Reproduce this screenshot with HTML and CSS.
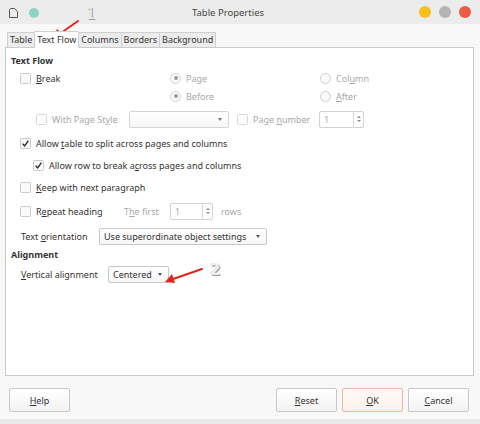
FILE: index.html
```html
<!DOCTYPE html>
<html>
<head>
<meta charset="utf-8">
<link rel="stylesheet" href="styles.css">
</head>
<body>
<div class="window">
  <header class="titlebar">
    <div class="tb-left">
      <svg class="doc-icon" width="9" height="10" viewBox="0 0 9 10"><path d="M1.5 0.5 H5.5 L8.5 3.5 V9.5 H0.5 V1.5 Z" fill="none" stroke="#555" stroke-width="1" stroke-linejoin="round"/></svg>
      <span class="dot teal"></span>
    </div>
    <div class="title">Table Properties</div>
    <div class="tb-right">
      <span class="dot yellow"></span>
      <span class="dot grey"></span>
      <span class="dot red"></span>
    </div>
  </header>

  <main class="body">
    <nav class="tabs">
      <span class="tab">Table</span>
      <span class="tab active">Text Flow</span>
      <span class="tab">Columns</span>
      <span class="tab">Borders</span>
      <span class="tab">Background</span>
    </nav>

    <section class="panel">
      <div class="heading h-flow">Text Flow</div>

      <div class="break-grid">
        <label class="opt"><span class="cb"></span><span><u>B</u>reak</span></label>
        <label class="opt dis"><span class="rb on"></span><span>Page</span></label>
        <label class="opt dis"><span class="rb"></span><span>Col<u>u</u>mn</span></label>
        <span></span>
        <label class="opt dis"><span class="rb on"></span><span>Before</span></label>
        <label class="opt dis"><span class="rb"></span><span><u>A</u>fter</span></label>
      </div>

      <div class="row r-style">
        <label class="opt dis w-style"><span class="cb dis"></span><span>With Page St<u>y</u>le</span></label>
        <span class="select dis sel-style"><span class="sel-text"></span><span class="caret"></span></span>
        <label class="opt dis pn"><span class="cb dis"></span><span>Page <u>n</u>umber</span></label>
        <span class="spin dis sp-pn"><span class="spin-val">1</span><span class="spin-btns"><i class="up"></i><i class="down"></i></span></span>
      </div>

      <div class="row r-allow">
        <label class="opt"><span class="cb"><svg viewBox="0 0 11 11" width="11" height="11"><path d="M2.6 5.6 L4.6 7.8 L8.4 2.6" fill="none" stroke="#2b2b2b" stroke-width="1.4"/></svg></span><span>Allow <u>t</u>able to split across pages and columns</span></label>
      </div>

      <div class="row r-row">
        <label class="opt"><span class="cb"><svg viewBox="0 0 11 11" width="11" height="11"><path d="M2.6 5.6 L4.6 7.8 L8.4 2.6" fill="none" stroke="#2b2b2b" stroke-width="1.4"/></svg></span><span>Allow row to break a<u>c</u>ross pages and columns</span></label>
      </div>

      <div class="row r-keep">
        <label class="opt"><span class="cb"></span><span><u>K</u>eep with next paragraph</span></label>
      </div>

      <div class="row r-repeat">
        <label class="opt w-repeat"><span class="cb"></span><span>R<u>e</u>peat heading</span></label>
        <span class="lbl dis first">T<u>h</u>e first</span>
        <span class="spin dis sp-first"><span class="spin-val">1</span><span class="spin-btns"><i class="up"></i><i class="down"></i></span></span>
        <span class="lbl dis rows">rows</span>
      </div>

      <div class="row r-orient">
        <span class="lbl w-orient">Text <u>o</u>rientation</span>
        <span class="select sel-orient"><span class="sel-text">Use superordinate object settings</span><span class="caret"></span></span>
      </div>

      <div class="heading h-align">Alignment</div>

      <div class="row r-valign">
        <span class="lbl w-valign"><u>V</u>ertical alignment</span>
        <span class="select sel-valign"><span class="sel-text">Centered</span><span class="caret"></span></span>
      </div>
    </section>
  </main>

  <footer class="buttons">
    <button class="btn"><u>H</u>elp</button>
    <span class="spacer"></span>
    <button class="btn"><u>R</u>eset</button>
    <button class="btn ok"><u>O</u>K</button>
    <button class="btn"><u>C</u>ancel</button>
  </footer>
  <div class="strip"></div>

  <span class="mark mark1">1</span>
  <span class="mark mark2">2</span>
  <svg class="annot" width="480" height="424" viewBox="0 0 480 424">
    <line x1="78" y1="21" x2="61" y2="33" stroke="#e3241c" stroke-width="2" stroke-linecap="round"/>
    <polygon points="53,38 57,29 64,35" fill="#e3241c"/>
    <line x1="202" y1="269" x2="173" y2="279" stroke="#e3241c" stroke-width="2" stroke-linecap="round"/>
    <polygon points="165,282 172,274 175,283" fill="#e3241c"/>
  </svg>
</div>
</body>
</html>
```

FILE: styles.css
```css
* { box-sizing: border-box; }
html, body { margin: 0; padding: 0; }
body {
  font-family: "Noto Sans", "Open Sans", sans-serif;
  font-size: 9px;
  color: #333;
  background: #f7f7f7;
}
u { text-decoration-thickness: 1px; text-underline-offset: 1px; }

.window {
  position: relative;
  width: 480px;
  height: 424px;
  display: flex;
  flex-direction: column;
  background: #f8f8f8;
  overflow: hidden;
}

/* title bar */
.titlebar {
  height: 24px;
  flex: none;
  display: flex;
  align-items: center;
  background: #ececec;
  padding: 0 9px 0 9px;
}
.tb-left { display: flex; align-items: center; gap: 11px; width: 60px; padding-top: 1px; }
.title {
  flex: 1;
  text-align: center;
  font-size: 9.5px;
  color: #444;
  padding-right: 24px;
}
.tb-right { display: flex; align-items: center; gap: 8px; width: 60px; justify-content: flex-end; }
.dot { display: inline-block; border-radius: 50%; }
.teal { width: 10px; height: 10px; background: #8ed4c6; }
.yellow, .grey, .red { width: 12px; height: 12px; }
.yellow { background: #f6c11c; }
.grey { background: #b4b4b4; }
.red { background: #ec5a48; }

/* body */
.body {
  padding: 7px 6px 0 5px;
}
.tabs {
  display: flex;
  align-items: flex-end;
  height: 16px;
  padding-left: 2px;
  position: relative;
  z-index: 2;
}
.tab {
  height: 15px;
  line-height: 14px;
  padding: 0 2px 0 2px;
  border: 1px solid #cfcfcf;
  border-bottom: none;
  border-right: none;
  background: #ececec;
  color: #333;
}
.tab:last-child { border-right: 1px solid #cfcfcf; }
.tab.active {
  height: 17px;
  margin-bottom: -1px;
  line-height: 15px;
  background: #ffffff;
}
.panel {
  height: 329px;
  border: 1px solid #cacaca;
  background: #ffffff;
  padding: 0 0 0 5px;
  display: flex;
  flex-direction: column;
}
.heading { font-weight: bold; height: 16px; line-height: 16px; }
.h-flow { margin-top: 5px; }

.opt { display: inline-flex; align-items: center; gap: 5px; white-space: nowrap; }
.dis { color: #a8a8a8; }
.cb {
  width: 11px; height: 11px; flex: none;
  border: 1px solid #c9c9c9;
  border-radius: 1.5px;
  background: #fafafa;
  display: inline-flex;
  position: relative;
}
.cb svg { position: absolute; left: -1px; top: -1px; }
.cb.dis { border-color: #dadada; background: #fcfcfc; }
.rb {
  width: 11px; height: 11px; flex: none;
  border: 1px solid #cfcfcf;
  border-radius: 50%;
  background: #fafafa;
  display: inline-flex; align-items: center; justify-content: center;
}
.rb.on::after {
  content: ""; width: 4px; height: 4px; border-radius: 50%; background: #9a9a9a;
}

.break-grid {
  display: grid;
  grid-template-columns: 150px 150px auto;
  grid-auto-rows: 18px;
  align-items: center;
  padding-left: 9px;
}

.row { display: flex; align-items: center; height: 22px; }
.lbl { white-space: nowrap; }
.r-style { margin-top: 3px; padding-left: 25px; }
.w-style { width: 93px; }
.r-allow { margin-top: 2px; padding-left: 9px; }
.r-row { padding-left: 22px; }
.r-keep { padding-left: 9px; }
.r-repeat { margin-top: 2px; padding-left: 9px; }
.w-repeat { width: 104px; }
.r-orient { margin-top: 3px; padding-left: 10px; }
.w-orient { width: 78px; }
.r-valign { margin-top: 1px; height: 20px; padding-left: 10px; }
.w-valign { width: 87px; }

.select {
  height: 17px;
  border: 1px solid #c8c8c8;
  border-radius: 2px;
  background: linear-gradient(#ffffff, #f6f6f6);
  display: inline-flex;
  align-items: center;
  padding: 0 0 0 4px;
  color: #333;
}
.select .sel-text { flex: 1; white-space: nowrap; }
.caret {
  width: 0; height: 0;
  border-left: 2.5px solid transparent;
  border-right: 2.5px solid transparent;
  border-top: 3px solid #555;
  margin: 0 6px 0 6px;
}
.select.dis { border-color: #d4d4d4; }
.select.dis .caret { border-top-color: #777; }
.sel-style { width: 100px; }
.pn { margin-left: 8px; width: 82px; }
.sel-orient { width: 168px; }
.sel-valign { width: 61px; }

.spin {
  height: 17px;
  border: 1px solid #d2d2d2;
  border-radius: 2px;
  background: #fff;
  display: inline-flex;
  align-items: stretch;
}
.spin-val { flex: 1; padding-left: 4px; line-height: 15px; color: #aaa; }
.spin-btns {
  width: 10px;
  border-left: 1px solid #d8d8d8;
  display: flex; flex-direction: column; align-items: center; justify-content: center; gap: 2px;
}
.spin-btns i { width: 0; height: 0; border-left: 2px solid transparent; border-right: 2px solid transparent; }
.spin-btns .up { border-bottom: 2.5px solid #888; }
.spin-btns .down { border-top: 2.5px solid #888; }
.sp-pn { width: 45px; }
.first { width: 46px; }
.sp-first { width: 43px; }
.rows { margin-left: 8px; }

/* buttons */
.buttons {
  display: flex;
  align-items: center;
  gap: 5px;
  margin-top: 12px;
  padding: 0 11px 0 9px;
  height: 24px;
}
.spacer { flex: 1; }
.btn {
  width: 61px;
  height: 24px;
  font-family: inherit;
  font-size: 9px;
  color: #333;
  border: 1px solid #c8c8c8;
  border-radius: 2px;
  background: linear-gradient(#ffffff, #f3f3f3);
  padding: 0;
}
.btn.ok { border-color: #f0b7a2; background: linear-gradient(#fffaf8, #fdf1ec); }
.strip {
  margin-top: auto;
  height: 5px;
  background: #e9e9e9;
}

/* annotations */
.mark {
  position: absolute;
  font-family: "DejaVu Sans", sans-serif;
  font-size: 15px;
  color: #efefef;
  text-shadow: 1px 1px 0 #9a9a9a, -0.5px -0.5px 0 #d0d0d0;
  line-height: 1;
}
.mark1 { left: 86px; top: 7px; }
.mark2 { left: 210px; top: 263px; font-weight: bold; }
.annot { position: absolute; left: 0; top: 0; pointer-events: none; }
```
